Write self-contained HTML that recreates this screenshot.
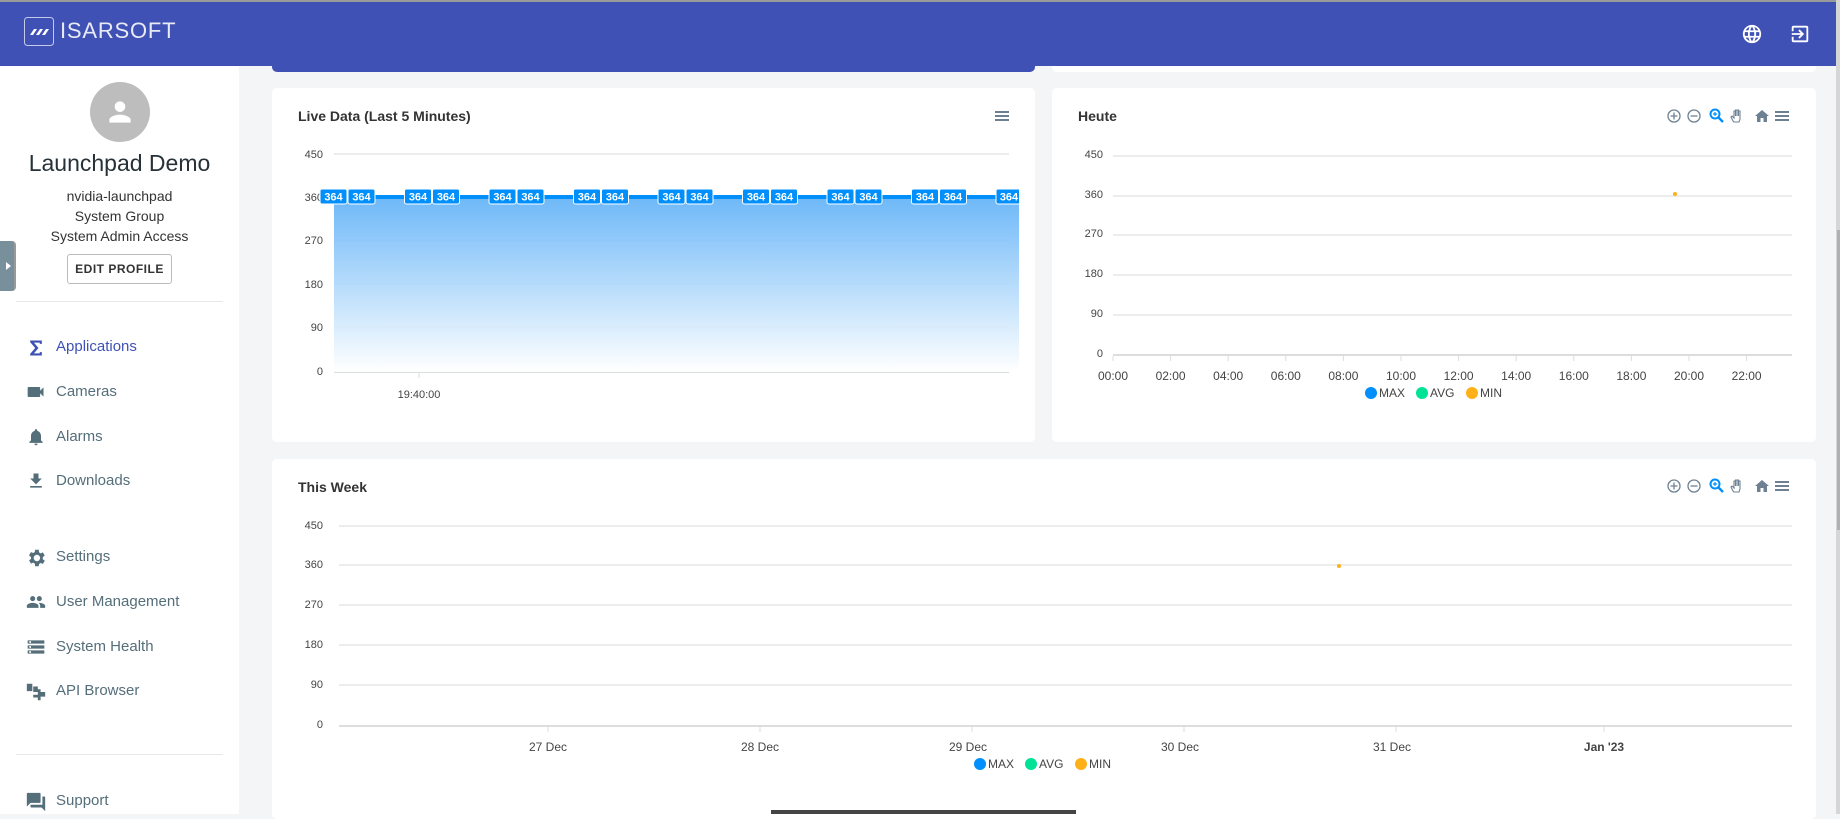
<!DOCTYPE html>
<html><head><meta charset="utf-8"><style>
*{margin:0;padding:0;box-sizing:border-box}
body{width:1840px;height:814px;overflow:hidden;background:#f4f5f7;font-family:"Liberation Sans",sans-serif;position:relative}
.abs{position:absolute}
.hdr{left:0;top:0;width:1836px;height:66px;background:#3f51b5;border-top:2px solid #9a9a9a;z-index:10}
.side{left:0;top:66px;width:239px;height:748px;background:#fff}
.card{background:#fff;border-radius:5px}
.t{font-weight:bold;font-size:14px;color:#333}
.mi{position:absolute;left:56px;font-size:15px;color:#546e7a}
.ic{position:absolute;left:25px}
.c{text-align:center;width:239px;left:0;font-size:14px;color:#333}
</style></head><body>
<div class="abs hdr">
 <svg class="abs" style="left:24px;top:15px" width="30" height="29" viewBox="0 0 30 29"><rect x="0.5" y="0.5" width="29" height="28" rx="3" fill="none" stroke="#c5cae9" stroke-width="1"/><path d="M6 18 L10 12 L13 12 L9 18Z M12 18 L16 12 L19 12 L15 18Z M18 18 L22 12 L25 12 L21 18Z" fill="#fff"/></svg>
 <div class="abs" style="left:60px;top:16px;color:#e8eaf6;font-size:22px;font-weight:300;letter-spacing:0.8px">ISARSOFT</div>
 <svg class="abs" style="left:1741px;top:21px" width="22" height="22" viewBox="0 0 24 24"><path fill="#fff" d="M12 2C6.5 2 2 6.5 2 12s4.5 10 10 10 10-4.5 10-10S17.5 2 12 2zm6.9 6h-3a15.7 15.7 0 0 0-1.4-3.6A8 8 0 0 1 18.9 8zM12 4a14 14 0 0 1 1.9 4h-3.8A14 14 0 0 1 12 4zM4.3 14a8 8 0 0 1 0-4h3.4a16 16 0 0 0 0 4H4.3zm.8 2h3a15.7 15.7 0 0 0 1.4 3.6A8 8 0 0 1 5.1 16zm3-8h-3a8 8 0 0 1 4.3-3.6C8.8 5.5 8.4 6.7 8.1 8zM12 20a14 14 0 0 1-1.9-4h3.8A14 14 0 0 1 12 20zm2.3-6H9.7a14.7 14.7 0 0 1 0-4h4.6a14.7 14.7 0 0 1 0 4zm.3 5.6c.6-1.1 1.1-2.3 1.4-3.6h3a8 8 0 0 1-4.4 3.6zM16.4 14a16 16 0 0 0 0-4h3.4a8 8 0 0 1 0 4h-3.4z"/></svg>
 <svg class="abs" style="left:1789px;top:21px" width="22" height="22" viewBox="0 0 24 24"><path fill="#fff" d="M10.1 15.6L11.5 17l5-5-5-5-1.4 1.4 2.6 2.6H3v2h9.7l-2.6 2.6zM19 3H5a2 2 0 0 0-2 2v4h2V5h14v14H5v-4H3v4a2 2 0 0 0 2 2h14a2 2 0 0 0 2-2V5a2 2 0 0 0-2-2z"/></svg>
</div>
<div class="abs" style="left:1836px;top:0;width:4px;height:814px;background:#d6d6d6"></div>
<div class="abs" style="left:1837px;top:230px;width:3px;height:300px;background:#b0b0b0"></div>

<div class="abs side">
 <div class="abs" style="left:90px;top:16px;width:60px;height:60px;border-radius:50%;background:#bdbdbd"></div>
 <svg class="abs" style="left:104px;top:30px" width="32" height="32" viewBox="0 0 24 24"><path fill="#fff" d="M12 12c2.2 0 4-1.8 4-4s-1.8-4-4-4-4 1.8-4 4 1.8 4 4 4zm0 2c-2.7 0-8 1.3-8 4v2h16v-2c0-2.7-5.3-4-8-4z"/></svg>
 <div class="abs c" style="top:84px;font-size:23px;color:#263238">Launchpad Demo</div>
 <div class="abs c" style="top:122px">nvidia-launchpad</div>
 <div class="abs c" style="top:142px">System Group</div>
 <div class="abs c" style="top:162px">System Admin Access</div>
 <div class="abs" style="left:67px;top:188px;width:105px;height:30px;border:1px solid #bbb;border-radius:3px;font-size:12px;font-weight:bold;color:#333;text-align:center;line-height:28px;letter-spacing:0.5px">EDIT PROFILE</div>
 <div class="abs" style="left:16px;top:235px;width:207px;height:1px;background:#e8e8e8"></div>
 <svg class="ic" style="top:272px" width="22" height="20" viewBox="0 0 24 24"><path fill="#3f51b5" d="M5 3h14v4h-2.5V5.5H9.5L15 12l-5.5 6.5h7V17H19v4H5v-2l6-7-6-7z"/></svg>
 <div class="mi" style="top:272px;color:#3f51b5">Applications</div>
 <svg class="ic" style="top:316px" width="22" height="20" viewBox="0 0 24 24"><path fill="#546e7a" d="M17 10.5V7a1 1 0 0 0-1-1H3a1 1 0 0 0-1 1v10a1 1 0 0 0 1 1h13a1 1 0 0 0 1-1v-3.5l4 4v-11l-4 4z"/></svg>
 <div class="mi" style="top:317px">Cameras</div>
 <svg class="ic" style="top:361px" width="22" height="20" viewBox="0 0 24 24"><path fill="#546e7a" d="M12 22c1.1 0 2-.9 2-2h-4c0 1.1.9 2 2 2zm6-6v-5c0-3.1-1.6-5.6-4.5-6.3V4a1.5 1.5 0 0 0-3 0v.7C7.6 5.4 6 7.9 6 11v5l-2 2v1h16v-1l-2-2z"/></svg>
 <div class="mi" style="top:362px">Alarms</div>
 <svg class="ic" style="top:405px" width="22" height="20" viewBox="0 0 24 24"><path fill="#546e7a" d="M19 9h-4V3H9v6H5l7 7 7-7zM5 18v2h14v-2H5z"/></svg>
 <div class="mi" style="top:406px">Downloads</div>
 <svg class="ic" style="top:481px" width="22" height="22" viewBox="0 0 24 24"><path fill="#546e7a" d="M19.4 13a7.5 7.5 0 0 0 0-2l2.1-1.6-2-3.5-2.5 1a7 7 0 0 0-1.7-1L15 3h-4l-.4 2.6a7 7 0 0 0-1.7 1l-2.5-1-2 3.5L6.6 11a7.5 7.5 0 0 0 0 2l-2.1 1.6 2 3.5 2.5-1c.5.4 1.1.7 1.7 1L11 21h4l.4-2.6c.6-.3 1.200-.6 1.7-1l2.5 1 2-3.5-2.2-1.6zM13 15.5a3.5 3.5 0 1 1 0-7 3.5 3.5 0 0 1 0 7z"/></svg>
 <div class="mi" style="top:482px">Settings</div>
 <svg class="ic" style="top:526px" width="22" height="20" viewBox="0 0 24 24"><path fill="#546e7a" d="M16 11c1.7 0 3-1.3 3-3s-1.3-3-3-3-3 1.3-3 3 1.3 3 3 3zm-8 0c1.7 0 3-1.3 3-3S9.7 5 8 5 5 6.3 5 8s1.3 3 3 3zm0 2c-2.3 0-7 1.2-7 3.5V19h14v-2.5C15 14.2 10.3 13 8 13zm8 0h-1c1.2.8 2 2 2 3.5V19h6v-2.5c0-2.300-4.7-3.5-7-3.5z"/></svg>
 <div class="mi" style="top:527px">User Management</div>
 <svg class="ic" style="top:571px" width="22" height="20" viewBox="0 0 24 24"><path fill="#546e7a" d="M2 20h20v-4H2v4zm2-3h2v2H4v-2zM2 4v4h20V4H2zm4 3H4V5h2v2zm-4 7h20v-4H2v4zm2-3h2v2H4v-2z"/></svg>
 <div class="mi" style="top:572px">System Health</div>
 <svg class="ic" style="top:615px" width="22" height="22" viewBox="0 0 24 24"><path fill="#546e7a" d="M2 3h6v8H2zM9 6h5v3h3v12h-3v-3H9v-3h5v-3H9z M17 12h5v5h-5z"/></svg>
 <div class="mi" style="top:616px">API Browser</div>
 <div class="abs" style="left:16px;top:688px;width:207px;height:1px;background:#e8e8e8"></div>
 <svg class="ic" style="top:725px" width="22" height="22" viewBox="0 0 24 24"><path fill="#546e7a" d="M21 6h-2v9H6v2c0 .6.4 1 1 1h11l4 4V7c0-.6-.4-1-1-1zm-4 6V3c0-.6-.4-1-1-1H3c-.6 0-1 .4-1 1v14l4-4h10c.6 0 1-.4 1-1z"/></svg>
 <div class="mi" style="top:726px">Support</div>
</div>
<div class="abs" style="left:0;top:241px;width:16px;height:50px;background:#78909c;border-radius:0 4px 4px 0;border-right:2px solid #999"></div>
<div class="abs" style="left:6px;top:262px;width:0;height:0;border-left:5px solid #fff;border-top:4px solid transparent;border-bottom:4px solid transparent"></div>

<div class="abs" style="left:272px;top:40px;width:763px;height:32px;background:#3f51b5;border-radius:0 0 5px 5px"></div>
<div class="abs card" style="left:1052px;top:40px;width:764px;height:32px;border-radius:0 0 5px 5px"></div>

<div class="abs card" style="left:272px;top:88px;width:763px;height:354px"></div>
<div class="abs t" style="left:298px;top:108px">Live Data (Last 5 Minutes)</div>
<svg class="abs" style="left:0;top:0" width="1840" height="814">
 <defs><linearGradient id="g" x1="0" y1="0" x2="0" y2="1"><stop offset="0" stop-color="#5db0f7"/><stop offset="1" stop-color="#ffffff"/></linearGradient></defs>
 <g stroke="#e6e6e6" stroke-width="1.5">
  <line x1="334" y1="154" x2="1009" y2="154"/><line x1="334" y1="240" x2="1009" y2="240"/><line x1="334" y1="284" x2="1009" y2="284"/><line x1="334" y1="327" x2="1009" y2="327"/><line x1="334" y1="372" x2="1009" y2="372" stroke="#ddd" stroke-width="2"/>
 </g>
 <rect x="334" y="197" width="685" height="175" fill="url(#g)" opacity="0.9"/>
 <line x1="334" y1="197" x2="1019" y2="197" stroke="#008ffb" stroke-width="4"/>
 <g font-family="Liberation Sans" font-size="11" fill="#444" text-anchor="end">
  <text x="323" y="158">450</text><text x="323" y="201">360</text><text x="323" y="244">270</text><text x="323" y="288">180</text><text x="323" y="331">90</text><text x="323" y="375">0</text>
 </g>
 <text x="419" y="398" font-family="Liberation Sans" font-size="11" fill="#444" text-anchor="middle">19:40:00</text>
 <line x1="419" y1="372" x2="419" y2="378" stroke="#ddd"/>
 <g font-family="Liberation Sans" font-size="11" font-weight="bold" fill="#fff" stroke="none">
  <g id="p"><rect x="320" y="189" width="27" height="15" rx="2" fill="#008ffb" stroke="#fff"/><text x="333.5" y="200.5" text-anchor="middle">364</text><rect x="348" y="189" width="27" height="15" rx="2" fill="#008ffb" stroke="#fff"/><text x="361.5" y="200.5" text-anchor="middle">364</text></g>
  <use href="#p" x="84.5"/><use href="#p" x="169"/><use href="#p" x="253.5"/><use href="#p" x="338"/><use href="#p" x="422.5"/><use href="#p" x="507"/><use href="#p" x="591.5"/>
  <rect x="996" y="189" width="27" height="15" rx="2" fill="#008ffb" stroke="#fff"/><text x="1009" y="200.5" text-anchor="middle">364</text>
 </g>
 <g fill="#6e8192"><rect x="995" y="111" width="14" height="2"/><rect x="995" y="115" width="14" height="2"/><rect x="995" y="119" width="14" height="2"/></g>
</svg>
<div class="abs" style="left:1019px;top:180px;width:16px;height:30px;background:#fff"></div>

<div class="abs card" style="left:1052px;top:88px;width:764px;height:354px"></div>
<div class="abs t" style="left:1078px;top:108px">Heute</div>
<div class="abs card" style="left:272px;top:459px;width:1544px;height:360px"></div>
<div class="abs t" style="left:298px;top:479px">This Week</div>

<svg class="abs" style="left:0;top:0" width="1840" height="814">
 <g id="tb">
  <circle cx="1674" cy="116" r="6" fill="none" stroke="#6e8192" stroke-width="1.3"/><path d="M1670.5 116h7M1674 112.5v7" stroke="#6e8192" stroke-width="1.3"/>
  <circle cx="1694" cy="116" r="6" fill="none" stroke="#6e8192" stroke-width="1.3"/><path d="M1690.5 116h7" stroke="#6e8192" stroke-width="1.3"/>
  <circle cx="1715" cy="114" r="4.5" fill="none" stroke="#008ffb" stroke-width="2"/><path d="M1718 117l5 5" stroke="#008ffb" stroke-width="2.4"/><path d="M1713 114h4M1715 112v4" stroke="#008ffb" stroke-width="1.2"/>
  <path d="M1733 121l-2-4 1-1 2 2v-7h1.5v5v-6h1.5v6v-6h1.5v6v-5h1.5v8l-1 3h-5z" fill="none" stroke="#6e8192" stroke-width="1.1"/>
  <path d="M1755 116l7-6 7 6h-2v6h-3.5v-4h-3v4H1757v-6z" fill="#6e8192"/>
  <g fill="#6e8192"><rect x="1775" y="111" width="14" height="2"/><rect x="1775" y="115" width="14" height="2"/><rect x="1775" y="119" width="14" height="2"/></g>
 </g>
 <use href="#tb" y="370"/>
 <g stroke="#e6e6e6" stroke-width="1.5">
  <line x1="1113" y1="156" x2="1792" y2="156"/><line x1="1113" y1="196" x2="1792" y2="196"/><line x1="1113" y1="235" x2="1792" y2="235"/><line x1="1113" y1="275" x2="1792" y2="275"/><line x1="1113" y1="315" x2="1792" y2="315"/>
  <line x1="1113" y1="355" x2="1792" y2="355" stroke="#ddd" stroke-width="2"/>
 </g>
 <g font-family="Liberation Sans" font-size="11" fill="#444" text-anchor="end">
  <text x="1103" y="158">450</text><text x="1103" y="198">360</text><text x="1103" y="237">270</text><text x="1103" y="277">180</text><text x="1103" y="317">90</text><text x="1103" y="357">0</text>
 </g>
 <g font-family="Liberation Sans" font-size="12" fill="#444" text-anchor="middle">
  <path stroke="#ddd" d="M1113 356v5M1170.6 356v5M1228.2 356v5M1285.8 356v5M1343.4 356v5M1401 356v5M1458.6 356v5M1516.2 356v5M1573.8 356v5M1631.4 356v5M1689 356v5M1746.6 356v5"/>
  <text x="1113" y="380">00:00</text><text x="1170.6" y="380">02:00</text><text x="1228.2" y="380">04:00</text><text x="1285.8" y="380">06:00</text><text x="1343.4" y="380">08:00</text><text x="1401" y="380">10:00</text><text x="1458.6" y="380">12:00</text><text x="1516.2" y="380">14:00</text><text x="1573.8" y="380">16:00</text><text x="1631.4" y="380">18:00</text><text x="1689" y="380">20:00</text><text x="1746.6" y="380">22:00</text>
 </g>
 <circle cx="1675" cy="194" r="2" fill="#feb019"/>
 <g font-family="Liberation Sans" font-size="12" fill="#444">
  <circle cx="1371" cy="393" r="6" fill="#008ffb"/><text x="1379" y="397">MAX</text>
  <circle cx="1422" cy="393" r="6" fill="#00e396"/><text x="1430" y="397">AVG</text>
  <circle cx="1472" cy="393" r="6" fill="#feb019"/><text x="1480" y="397">MIN</text>
 </g>
 <g stroke="#e6e6e6" stroke-width="1.5">
  <line x1="339" y1="526" x2="1792" y2="526"/><line x1="339" y1="565" x2="1792" y2="565"/><line x1="339" y1="605" x2="1792" y2="605"/><line x1="339" y1="645" x2="1792" y2="645"/><line x1="339" y1="685" x2="1792" y2="685"/>
  <line x1="339" y1="726" x2="1792" y2="726" stroke="#ddd" stroke-width="2"/>
 </g>
 <g font-family="Liberation Sans" font-size="11" fill="#444" text-anchor="end">
  <text x="323" y="529">450</text><text x="323" y="568">360</text><text x="323" y="608">270</text><text x="323" y="648">180</text><text x="323" y="688">90</text><text x="323" y="728">0</text>
 </g>
 <path d="M548 727v5M760 727v5M972 727v5M1184 727v5M1396 727v5M1604 727v5" stroke="#ddd"/>
 <g font-family="Liberation Sans" font-size="12" fill="#444" text-anchor="middle">
  <text x="548" y="751">27 Dec</text><text x="760" y="751">28 Dec</text><text x="968" y="751">29 Dec</text><text x="1180" y="751">30 Dec</text><text x="1392" y="751">31 Dec</text><text x="1604" y="751" font-weight="bold">Jan '23</text>
 </g>
 <circle cx="1339" cy="566" r="2" fill="#feb019"/>
 <g font-family="Liberation Sans" font-size="12" fill="#444">
  <circle cx="980" cy="764" r="6" fill="#008ffb"/><text x="988" y="768">MAX</text>
  <circle cx="1031" cy="764" r="6" fill="#00e396"/><text x="1039" y="768">AVG</text>
  <circle cx="1081" cy="764" r="6" fill="#feb019"/><text x="1089" y="768">MIN</text>
 </g>
</svg>
<div class="abs" style="left:771px;top:810px;width:305px;height:4px;background:#444"></div>
</body></html>
